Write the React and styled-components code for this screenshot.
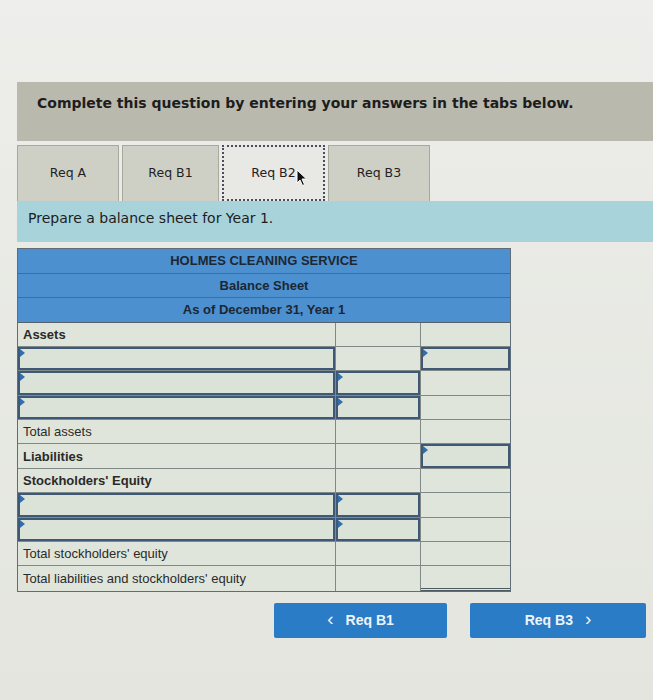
import styled, { createGlobalStyle } from 'styled-components'

const GlobalStyle = createGlobalStyle`
	html, body {
		margin: 0;
		padding: 0;
		background: #e6e7e1;
	}
	* {
		box-sizing: border-box;
	}
`

const tabs = ['Req A', 'Req B1', 'Req B2', 'Req B3']
const tabWidths = [102, 97, 103, 102]

// inputs = [label, col 2, col 3]
const rows = [
	{ label: 'Assets', bold: true },
	{ label: '', inputs: [true, false, true] },
	{ label: '', inputs: [true, true, false] },
	{ label: '', inputs: [true, true, false] },
	{ label: 'Total assets' },
	{ label: 'Liabilities', bold: true, inputs: [false, false, true] },
	{ label: "Stockholders' Equity", bold: true },
	{ label: '', inputs: [true, true, false] },
	{ label: '', inputs: [true, true, false] },
	{ label: "Total stockholders' equity" },
	{ label: "Total liabilities and stockholders' equity", double: true },
]

const Cursor = () => (
	<CursorSvg width='12' height='18' viewBox='0 0 12 18'>
		<path d='M1 1 L1 14 L4 11 L6.5 16.5 L8.5 15.5 L6 10 L10.5 10 Z' fill='#111' stroke='#fff' strokeWidth='1' />
	</CursorSvg>
)

const App = () => {
	return (
		<Page>
			<GlobalStyle />
			<Banner>Complete this question by entering your answers in the tabs below.</Banner>

			<TabRow>
				{tabs.map((t, i) => (
					<Tab key={t} $active={i === 2} $w={tabWidths[i]}>
						{t}
						{i === 2 && <Cursor />}
					</Tab>
				))}
			</TabRow>

			<Instruction>Prepare a balance sheet for Year 1.</Instruction>

			<Sheet>
				<HeadRow>HOLMES CLEANING SERVICE</HeadRow>
				<HeadRow>Balance Sheet</HeadRow>
				<HeadRow $last>As of December 31, Year 1</HeadRow>
				{rows.map((r, i) => {
					const inputs = r.inputs || [false, false, false]
					return (
						<Row key={i}>
							<Cell $input={inputs[0]} $bold={r.bold}>
								{inputs[0] && <Marker />}
								{r.label}
							</Cell>
							<Cell $input={inputs[1]}>{inputs[1] && <Marker />}</Cell>
							<Cell $input={inputs[2]} $double={r.double}>
								{inputs[2] && <Marker />}
							</Cell>
						</Row>
					)
				})}
			</Sheet>

			<Buttons>
				<NavButton>
					<Chevron>&lsaquo;</Chevron> Req B1
				</NavButton>
				<NavButton $wide>
					Req B3 <Chevron>&rsaquo;</Chevron>
				</NavButton>
			</Buttons>
		</Page>
	)
}

const Page = styled.div`
	padding: 82px 0 60px 17px;
	min-height: 700px;
	background: linear-gradient(180deg, #eeeeec 0px, #eaebe6 200px, #e3e5de 700px);
`

const Banner = styled.div`
	height: 59px;
	background: #b9b9ae;
	padding: 13px 0 0 20px;
	font-family: 'DejaVu Sans', Verdana, sans-serif;
	font-weight: 700;
	font-size: 14px;
	color: #1d1d1d;
`

const TabRow = styled.div`
	display: flex;
	gap: 3px;
	margin-top: 4px;
	height: 56px;
`

const Tab = styled.div`
	position: relative;
	width: ${(p) => p.$w}px;
	display: flex;
	align-items: center;
	justify-content: center;
	padding-bottom: 2px;
	font-family: 'DejaVu Sans', Verdana, sans-serif;
	font-size: 12.5px;
	color: #222;
	background: ${(p) => (p.$active ? '#e8e8e4' : '#cfd0c5')};
	border: ${(p) => (p.$active ? '2px dotted #4a4e5c' : '1px solid #a8a99e')};
	border-bottom: ${(p) => (p.$active ? '2px dotted #4a4e5c' : 'none')};
`

const CursorSvg = styled.svg`
	position: absolute;
	left: 72px;
	top: 22px;
`

const Instruction = styled.div`
	height: 41px;
	background: #a9d3db;
	padding: 9px 0 0 11px;
	font-family: 'DejaVu Sans', Verdana, sans-serif;
	font-size: 14px;
	color: #1e1e1e;
`

const Sheet = styled.div`
	margin-top: 6px;
	width: 494px;
	border: 1px solid #5f6d78;
	background: #dfe5da;
`

const HeadRow = styled.div`
	height: 24.5px;
	background: #4c90d0;
	border-bottom: 1px solid ${(p) => (p.$last ? '#55606a' : '#3b6f9f')};
	display: flex;
	align-items: center;
	justify-content: center;
	font-family: 'Liberation Sans', Arial, sans-serif;
	font-weight: 700;
	font-size: 13px;
	color: #1c2733;
`

const Row = styled.div`
	display: grid;
	grid-template-columns: 318px 85px 1fr;
	height: 24.4px;
	border-bottom: 1px solid #7f8a88;

	&:last-child {
		border-bottom: none;
	}
`

const Cell = styled.div`
	position: relative;
	display: flex;
	align-items: center;
	padding-left: 5px;
	font-family: 'Liberation Sans', Arial, sans-serif;
	font-size: 13px;
	font-weight: ${(p) => (p.$bold ? 700 : 400)};
	color: #2a2a2a;
	border-right: 1px solid #7f8a88;
	background: ${(p) => (p.$input ? '#dbe3d8' : 'transparent')};
	box-shadow: ${(p) => (p.$input ? 'inset 0 0 0 2px #3e5876' : 'none')};

	&:last-child {
		border-right: none;
		border-bottom: ${(p) => (p.$double ? '3px double #4f5a60' : 'none')};
	}
`

const Marker = styled.span`
	position: absolute;
	left: 2px;
	top: 2px;
	width: 0;
	height: 0;
	border-top: 4px solid transparent;
	border-bottom: 4px solid transparent;
	border-left: 5px solid #2f6fae;
`

const Buttons = styled.div`
	display: flex;
	gap: 23px;
	margin: 11px 0 0 257px;
`

const NavButton = styled.div`
	width: ${(p) => (p.$wide ? 176 : 173)}px;
	height: 35px;
	border-radius: 2px;
	background: #2a7cc6;
	display: flex;
	align-items: center;
	justify-content: center;
	gap: 12px;
	font-family: 'Liberation Sans', Arial, sans-serif;
	font-weight: 700;
	font-size: 14px;
	color: #eef4fa;
`

const Chevron = styled.span`
	font-size: 19px;
	font-weight: 400;
	margin-top: -3px;
`

export default App
